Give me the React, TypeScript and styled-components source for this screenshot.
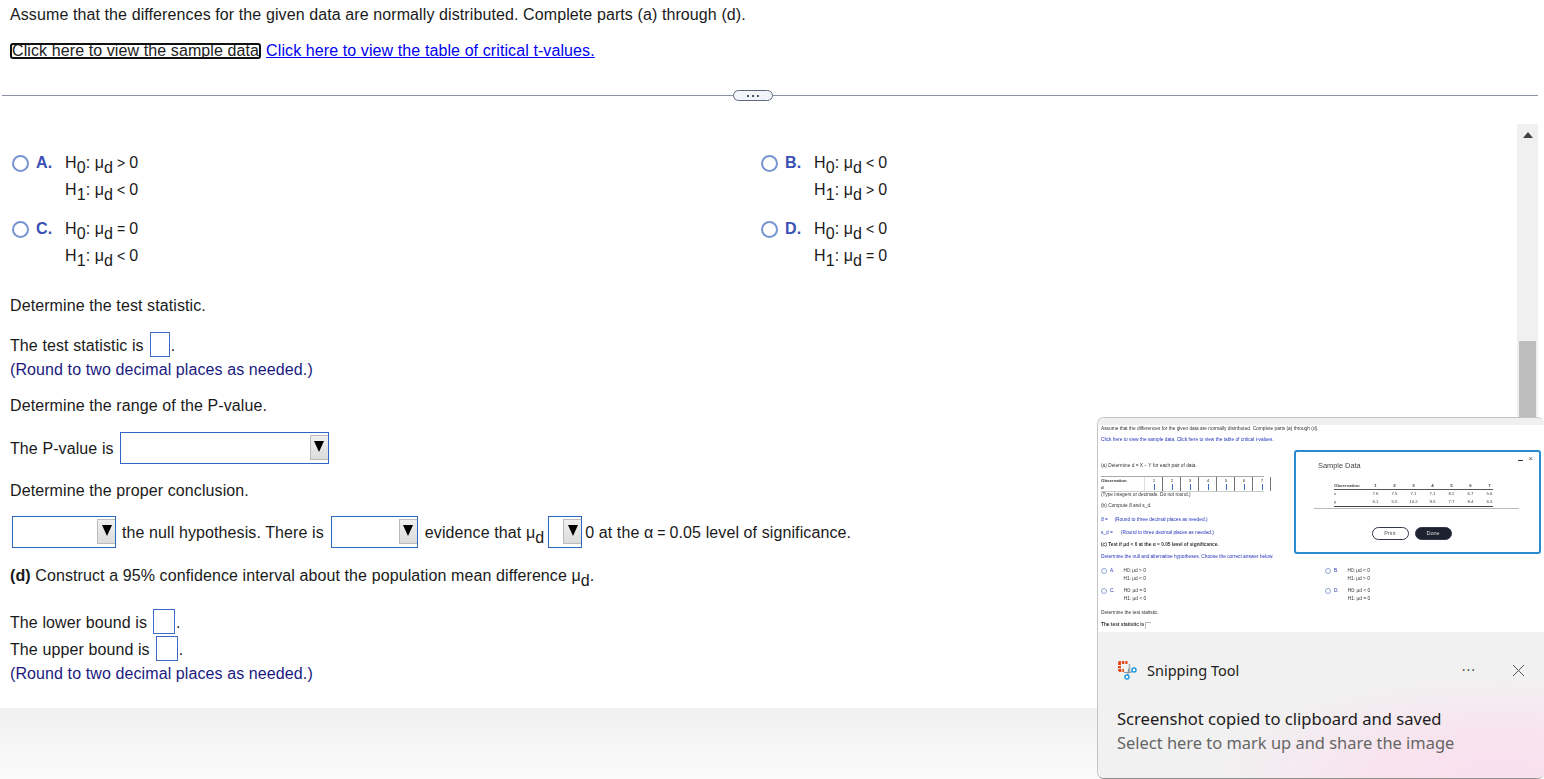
import React, { FC } from "react";
import styled, { createGlobalStyle } from "styled-components";

const GlobalStyle = createGlobalStyle`
  html, body {
    margin: 0;
    padding: 0;
    background: #fff;
    overflow: hidden;
  }
  body {
    font-family: "Liberation Sans", Arial, sans-serif;
    font-size: 16px;
    letter-spacing: 0.1px;
    color: #1a1a1a;
  }
`;

const Page = styled.div`
  position: relative;
  width: 1544px;
  height: 779px;
  overflow: hidden;
  display: flex;
  flex-direction: column;
`;

const Question = styled.div`
  padding: 5px 0 0 10px;
  flex: none;
`;

const Para = styled.div<{ $mt?: number; $color?: string }>`
  line-height: 20px;
  height: 20px;
  margin-top: ${(p) => p.$mt ?? 0}px;
  color: ${(p) => p.$color ?? "inherit"};
  white-space: nowrap;
`;

const LinkRow = styled.div`
  display: flex;
  align-items: center;
  height: 20px;
  margin-top: 16px;
  white-space: nowrap;
`;

const FocusLink = styled.a`
  display: block;
  box-sizing: border-box;
  height: 16px;
  line-height: 12px;
  overflow: hidden;
  border: 2px solid #111;
  border-radius: 3px;
  color: #222;
`;

const BlueLink = styled.a`
  color: #0000ee;
  text-decoration: underline;
  margin-left: 5px;
`;

const Divider = styled.div`
  display: flex;
  align-items: center;
  margin: 29px 6px 0 2px;
  height: 11px;
`;

const DividerLine = styled.div<{ $w?: number }>`
  flex: ${(p) => (p.$w ? `0 0 ${p.$w}px` : "1")};
  height: 1px;
  background: #8a93a3;
`;

const ExpandPill = styled.div`
  width: 38px;
  height: 9px;
  border: 1px solid #5f6b7c;
  border-radius: 6px;
  background: #f2f5fa;
  display: flex;
  align-items: center;
  justify-content: center;
  gap: 3px;
`;

const PillDot = styled.span`
  width: 2px;
  height: 2px;
  background: #4b5565;
`;

const OptionGrid = styled.div`
  display: grid;
  grid-template-columns: 749px 749px;
  row-gap: 12px;
  margin: 48px 0 0 12px;
`;

const OptionCell = styled.div`
  display: flex;
`;

const Radio = styled.span`
  width: 13px;
  height: 13px;
  border: 2px solid #7795d0;
  border-radius: 50%;
  margin: 6px 7px 0 0;
  flex: none;
`;

const OptionLetter = styled.b`
  color: #3a50b4;
  width: 29px;
  line-height: 27px;
  flex: none;
`;

const Hypotheses = styled.div`
  line-height: 27px;
`;

const Formula = styled.div`
  height: 27px;
  white-space: nowrap;
`;

const Sub = styled.sub`
  font-size: 16px;
  line-height: 0;
  vertical-align: -5px;
`;

const Rel = styled.span`
  font-size: 14px;
  margin: 0 4px;
`;

const Body = styled.div`
  padding-left: 10px;
  flex: none;
`;

const InputRow = styled.div<{ $mt?: number; $pad?: number }>`
  display: flex;
  align-items: center;
  margin-top: ${(p) => p.$mt ?? 0}px;
  margin-left: ${(p) => p.$pad ?? 0}px;
  white-space: pre;
`;

const RowText = styled.span`
  position: relative;
  top: 1px;
`;

const AnswerBox = styled.span<{ $w: number }>`
  display: inline-block;
  box-sizing: border-box;
  width: ${(p) => p.$w}px;
  height: 25px;
  border: 1px solid #3b6bc7;
  margin: 0 1px 0 6px;
`;

const Select = styled.span<{ $w: number; $ml: number; $mr: number }>`
  box-sizing: border-box;
  display: flex;
  justify-content: flex-end;
  width: ${(p) => p.$w}px;
  height: 32px;
  border: 1px solid #2f66c8;
  margin: 0 ${(p) => p.$mr}px 0 ${(p) => p.$ml}px;
  flex: none;
`;

const SelectArrow = styled.span`
  width: 18px;
  height: 25px;
  background: linear-gradient(#efefef, #dcdcdc);
  border: 1px solid #bcbcbc;
  border-right: 0;
  box-sizing: border-box;
  margin-top: 2px;
  display: flex;
  justify-content: center;
  padding-top: 5px;
  &::after {
    content: "";
    width: 0;
    height: 0;
    border-left: 5.5px solid transparent;
    border-right: 5.5px solid transparent;
    border-top: 11px solid #000;
  }
`;

const Footer = styled.div`
  flex: 1;
  margin-top: 24px;
  background: linear-gradient(#f0f0f0, #fbfbfb);
`;

const ScrollTrack = styled.div`
  position: absolute;
  left: 1517px;
  top: 124px;
  width: 21px;
  height: 293px;
  background: #f0f0f0;
  display: flex;
  flex-direction: column;
  align-items: center;
  justify-content: space-between;
`;

const ScrollArrow = styled.div`
  margin-top: 8px;
  border-left: 5px solid transparent;
  border-right: 5px solid transparent;
  border-bottom: 6px solid #404040;
`;

const ScrollThumb = styled.div`
  width: 17px;
  height: 76px;
  background: #bdbdbd;
`;

const Overlay = styled.div`
  position: absolute;
  left: 1097px;
  top: 417px;
  width: 447px;
  height: 362px;
  box-sizing: border-box;
  border-radius: 7px;
  border: 1px solid #c4c4c4;
  border-right: 0;
  border-bottom-color: #8f8f8f;
  overflow: hidden;
  display: flex;
  flex-direction: column;
  background: #fff;
  letter-spacing: 0;
`;

const ThumbStrip = styled.div`
  height: 7px;
  background: #f0f0f0;
  flex: none;
`;

const ThumbBody = styled.div`
  position: relative;
  flex: 1;
  padding-left: 3px;
  font-size: 4.8px;
  color: #333;
  overflow: hidden;
`;

const ThumbLine = styled.div<{ $mt?: number; $blue?: boolean; $bold?: boolean }>`
  height: 6px;
  line-height: 6px;
  margin-top: ${(p) => p.$mt ?? 0}px;
  white-space: nowrap;
  color: ${(p) => (p.$blue ? "#2233bb" : "#333")};
  font-weight: ${(p) => (p.$bold ? 700 : 400)};
  filter: blur(0.4px);
`;

const ThumbTable = styled.div`
  display: grid;
  grid-template-columns: 44px repeat(7, 17px);
  column-gap: 1px;
  width: 163px;
  height: 16px;
  margin-top: 7px;
  border-top: 1px solid #aaa;
  border-bottom: 1px solid #ccc;
  box-sizing: border-box;
`;

const ThumbCol = styled.div<{ $head?: boolean }>`
  font-size: 4.4px;
  font-weight: ${(p) => (p.$head ? 700 : 400)};
  line-height: 7px;
  text-align: ${(p) => (p.$head ? "left" : "center")};
  border-right: 1px solid ${(p) => (p.$head ? "#ddd" : "#777")};
  position: relative;
  color: #333;
  filter: blur(0.3px);
`;

const ThumbCellBar = styled.div`
  width: 1px;
  height: 6px;
  margin: 0 auto;
  background: #3b6bc7;
`;

const ThumbOptions = styled.div`
  display: grid;
  grid-template-columns: 224px 224px;
  row-gap: 6px;
  margin-top: 8px;
`;

const ThumbOption = styled.div`
  display: flex;
  gap: 2px;
`;

const ThumbRadio = styled.span`
  width: 4px;
  height: 4px;
  border: 1px solid #8ea6d8;
  border-radius: 50%;
  margin-right: 1px;
  flex: none;
`;

const ThumbFormulas = styled.div`
  margin-left: 7px;
  display: flex;
  flex-direction: column;
  gap: 2px;
`;

const ThumbInputBox = styled.span`
  display: inline-block;
  width: 5px;
  height: 6px;
  margin-left: 1px;
  border: 1px solid #bbb;
  border-right: 0;
  border-bottom: 0;
  vertical-align: top;
`;

const Modal = styled.div`
  position: absolute;
  left: 196px;
  top: 25px;
  width: 247px;
  height: 104px;
  box-sizing: border-box;
  background: #fff;
  border: 2px solid #2a8ad0;
  border-radius: 3px;
  padding: 9px 20px 0 22px;
`;

const ModalTitle = styled.div`
  font-size: 7.4px;
  line-height: 10px;
  color: #444;
  filter: blur(0.3px);
`;

const WindowControls = styled.div`
  position: absolute;
  right: 6px;
  top: 2px;
  display: flex;
  align-items: center;
  gap: 5px;
  color: #555;
  font-size: 8px;
  line-height: 10px;
`;

const MinBar = styled.span`
  width: 5px;
  height: 1px;
  background: #333;
  margin-top: 2px;
`;

const SampleTable = styled.div`
  margin: 11px 0 0 16px;
  width: 159px;
  border-bottom: 1px solid #444;
  font-size: 4.4px;
  color: #444;
  filter: blur(0.3px);
`;

const SampleRow = styled.div<{ $head?: boolean }>`
  display: grid;
  grid-template-columns: 32px repeat(7, 19px);
  height: 8px;
  line-height: 8px;
  text-align: center;
  border-bottom: 1px solid ${(p) => (p.$head ? "#555" : "transparent")};
  box-sizing: border-box;
  font-weight: ${(p) => (p.$head ? 700 : 400)};
  & > :first-child {
    text-align: left;
  }
`;

const ModalRule = styled.div`
  height: 1px;
  margin: 1px 0 0 -4px;
  background: #bbb;
`;

const ModalActions = styled.div`
  display: flex;
  justify-content: center;
  gap: 6px;
  margin: 18px 14px 0 0;
`;

const ModalButton = styled.span<{ $dark?: boolean }>`
  box-sizing: border-box;
  width: 37px;
  height: 13px;
  border-radius: 7px;
  border: 1px solid #30384a;
  background: ${(p) => (p.$dark ? "#1c2230" : "#fff")};
  color: ${(p) => (p.$dark ? "#ddd" : "#555")};
  font-size: 5.5px;
  line-height: 11px;
  text-align: center;
  filter: blur(0.3px);
`;

const Toast = styled.div`
  height: 146px;
  flex: none;
  box-sizing: border-box;
  padding: 27px 0 0 19px;
  background: radial-gradient(ellipse 290px 105px at 90% 100%, #fadfee 0%, #f8e4ef 45%, rgba(241, 241, 241, 0) 100%), #f1f1f1;
  font-family: "Noto Sans", "Open Sans", sans-serif;
`;

const ToastHeader = styled.div`
  display: flex;
  align-items: center;
  height: 22px;
  font-size: 14.5px;
  color: #222;
`;

const ToastName = styled.span`
  margin-left: 10px;
  flex: 1;
`;

const ToastMore = styled.span`
  color: #555;
  font-size: 14px;
  letter-spacing: 1px;
  margin-right: 36px;
  line-height: 14px;
`;

const ToastClose = styled.svg`
  width: 13px;
  height: 13px;
  margin-right: 19px;
`;

const ToastTitle = styled.div`
  margin-top: 26px;
  font-size: 16.6px;
  line-height: 24px;
  color: #1c1c1c;
  white-space: nowrap;
`;

const ToastSub = styled.div`
  font-size: 16.45px;
  line-height: 24px;
  color: #666;
  white-space: nowrap;
`;

const Mu: FC = () => (
  <>
    μ<Sub>d</Sub>
  </>
);

const Hypothesis: FC<{ idx: string; rel: string }> = ({ idx, rel }) => (
  <Formula>
    H<Sub>{idx}</Sub>: <Mu />
    <Rel>{rel}</Rel>0
  </Formula>
);

const options = [
  { letter: "A.", h0: ">", h1: "<" },
  { letter: "B.", h0: "<", h1: ">" },
  { letter: "C.", h0: "=", h1: "<" },
  { letter: "D.", h0: "<", h1: "=" }
];

const SnipIcon: FC = () => (
  <svg width="20" height="20" viewBox="0 0 20 20" fill="none">
    <path d="M1.5 2.5h9M2.5 2.5v8.5M2 10.5h5" stroke="#e2491b" strokeWidth="3" strokeDasharray="2.4 1" />
    <path d="M12.5 4v9" stroke="#a7afb8" strokeWidth="1.6" />
    <path d="M7 12.5h6.5l2-1.5M12 8.5l-1.5 7" stroke="#8a97a5" strokeWidth="1.2" />
    <circle cx="17" cy="10" r="2" stroke="#1f9ae0" strokeWidth="1.5" fill="#fff" />
    <circle cx="10" cy="17" r="2" stroke="#1f9ae0" strokeWidth="1.5" fill="#fff" />
  </svg>
);

const sampleRows = [
  ["x", "7.6", "7.5", "7.1", "7.1", "8.2", "6.7", "5.6"],
  ["y", "6.1", "5.5", "10.2", "9.5", "7.7", "8.4", "6.5"]
];

const Thumbnail: FC = () => (
  <Overlay>
    <ThumbStrip />
    <ThumbBody>
      <ThumbLine $mt={1}>Assume that the differences for the given data are normally distributed. Complete parts (a) through (d).</ThumbLine>
      <ThumbLine $mt={5} $blue>Click here to view the sample data. Click here to view the table of critical t-values.</ThumbLine>
      <ThumbLine $mt={20}>(a) Determine d = X − Y for each pair of data.</ThumbLine>
      <ThumbTable>
        <ThumbCol $head>Observation<br />d</ThumbCol>
        {[1, 2, 3, 4, 5, 6, 7].map((n) => (
          <ThumbCol key={n}>
            {n}
            <ThumbCellBar />
          </ThumbCol>
        ))}
      </ThumbTable>
      <ThumbLine>(Type integers or decimals. Do not round.)</ThumbLine>
      <ThumbLine $mt={5}>(b) Compute d̄ and s_d.</ThumbLine>
      <ThumbLine $mt={8} $blue>d̄ = &nbsp; &nbsp; (Round to three decimal places as needed.)</ThumbLine>
      <ThumbLine $mt={7} $blue>s_d = &nbsp; &nbsp; &nbsp;(Round to three decimal places as needed.)</ThumbLine>
      <ThumbLine $mt={6} $bold>(c) Test if μd &lt; 0 at the α = 0.05 level of significance.</ThumbLine>
      <ThumbLine $mt={6} $blue>Determine the null and alternative hypotheses. Choose the correct answer below.</ThumbLine>
      <ThumbOptions>
        {options.map((o) => (
          <ThumbOption key={o.letter}>
            <ThumbRadio />
            <ThumbLine $blue>{o.letter}</ThumbLine>
            <ThumbFormulas>
              <ThumbLine>H0: μd {o.h0} 0</ThumbLine>
              <ThumbLine>H1: μd {o.h1} 0</ThumbLine>
            </ThumbFormulas>
          </ThumbOption>
        ))}
      </ThumbOptions>
      <ThumbLine $mt={8}>Determine the test statistic.</ThumbLine>
      <ThumbLine $mt={6} $bold>The test statistic is<ThumbInputBox /></ThumbLine>
      <Modal>
        <ModalTitle>Sample Data</ModalTitle>
        <WindowControls>
          <MinBar />
          <span>×</span>
        </WindowControls>
        <SampleTable>
          <SampleRow $head>
            <span>Observation</span>
            {[1, 2, 3, 4, 5, 6, 7].map((n) => (
              <span key={n}>{n}</span>
            ))}
          </SampleRow>
          {sampleRows.map((row) => (
            <SampleRow key={row[0]}>
              {row.map((v, i) => (
                <span key={i}>{v}</span>
              ))}
            </SampleRow>
          ))}
        </SampleTable>
        <ModalRule />
        <ModalActions>
          <ModalButton>Print</ModalButton>
          <ModalButton $dark>Done</ModalButton>
        </ModalActions>
      </Modal>
    </ThumbBody>
    <Toast>
      <ToastHeader>
        <SnipIcon />
        <ToastName>Snipping Tool</ToastName>
        <ToastMore>···</ToastMore>
        <ToastClose viewBox="0 0 13 13" fill="none">
          <path d="M1 1l11 11M12 1L1 12" stroke="#555" strokeWidth="1" />
        </ToastClose>
      </ToastHeader>
      <ToastTitle>Screenshot copied to clipboard and saved</ToastTitle>
      <ToastSub>Select here to mark up and share the image</ToastSub>
    </Toast>
  </Overlay>
);

const App: FC = () => (
  <Page>
    <GlobalStyle />
    <Question>
      <Para>Assume that the differences for the given data are normally distributed. Complete parts (a) through (d).</Para>
      <LinkRow>
        <FocusLink>Click here to view the sample data</FocusLink>
        <BlueLink>Click here to view the table of critical t-values.</BlueLink>
      </LinkRow>
    </Question>
    <Divider>
      <DividerLine $w={731} />
      <ExpandPill>
        <PillDot />
        <PillDot />
        <PillDot />
      </ExpandPill>
      <DividerLine />
    </Divider>
    <OptionGrid>
      {options.map((o) => (
        <OptionCell key={o.letter}>
          <Radio />
          <OptionLetter>{o.letter}</OptionLetter>
          <Hypotheses>
            <Hypothesis idx="0" rel={o.h0} />
            <Hypothesis idx="1" rel={o.h1} />
          </Hypotheses>
        </OptionCell>
      ))}
    </OptionGrid>
    <Body>
      <Para $mt={27}>Determine the test statistic.</Para>
      <InputRow $mt={16}>
        <RowText>The test statistic is</RowText>
        <AnswerBox $w={20} />
        <RowText>.</RowText>
      </InputRow>
      <Para $mt={3} $color="#1a1a80">(Round to two decimal places as needed.)</Para>
      <Para $mt={16}>Determine the range of the P-value.</Para>
      <InputRow $mt={16}>
        <RowText>The P-value is</RowText>
        <Select $w={209} $ml={6} $mr={0}>
          <SelectArrow />
        </Select>
      </InputRow>
      <Para $mt={17}>Determine the proper conclusion.</Para>
      <InputRow $mt={15} $pad={2}>
        <Select $w={104} $ml={0} $mr={6}>
          <SelectArrow />
        </Select>
        <RowText>the null hypothesis. There is</RowText>
        <Select $w={87} $ml={7} $mr={7}>
          <SelectArrow />
        </Select>
        <RowText>
          evidence that <Mu />
        </RowText>
        <Select $w={34} $ml={4} $mr={3}>
          <SelectArrow />
        </Select>
        <RowText>
          0 at the α<Rel>=</Rel>0.05 level of significance.
        </RowText>
      </InputRow>
      <Para $mt={18}>
        <b>(d)</b> Construct a 95% confidence interval about the population mean difference <Mu />.
      </Para>
      <InputRow $mt={23}>
        <RowText>The lower bound is</RowText>
        <AnswerBox $w={22} />
        <RowText>.</RowText>
      </InputRow>
      <InputRow $mt={2}>
        <RowText>The upper bound is</RowText>
        <AnswerBox $w={22} />
        <RowText>.</RowText>
      </InputRow>
      <Para $mt={3} $color="#1a1a80">(Round to two decimal places as needed.)</Para>
    </Body>
    <Footer />
    <ScrollTrack>
      <ScrollArrow />
      <ScrollThumb />
    </ScrollTrack>
    <Thumbnail />
  </Page>
);

export default App;
